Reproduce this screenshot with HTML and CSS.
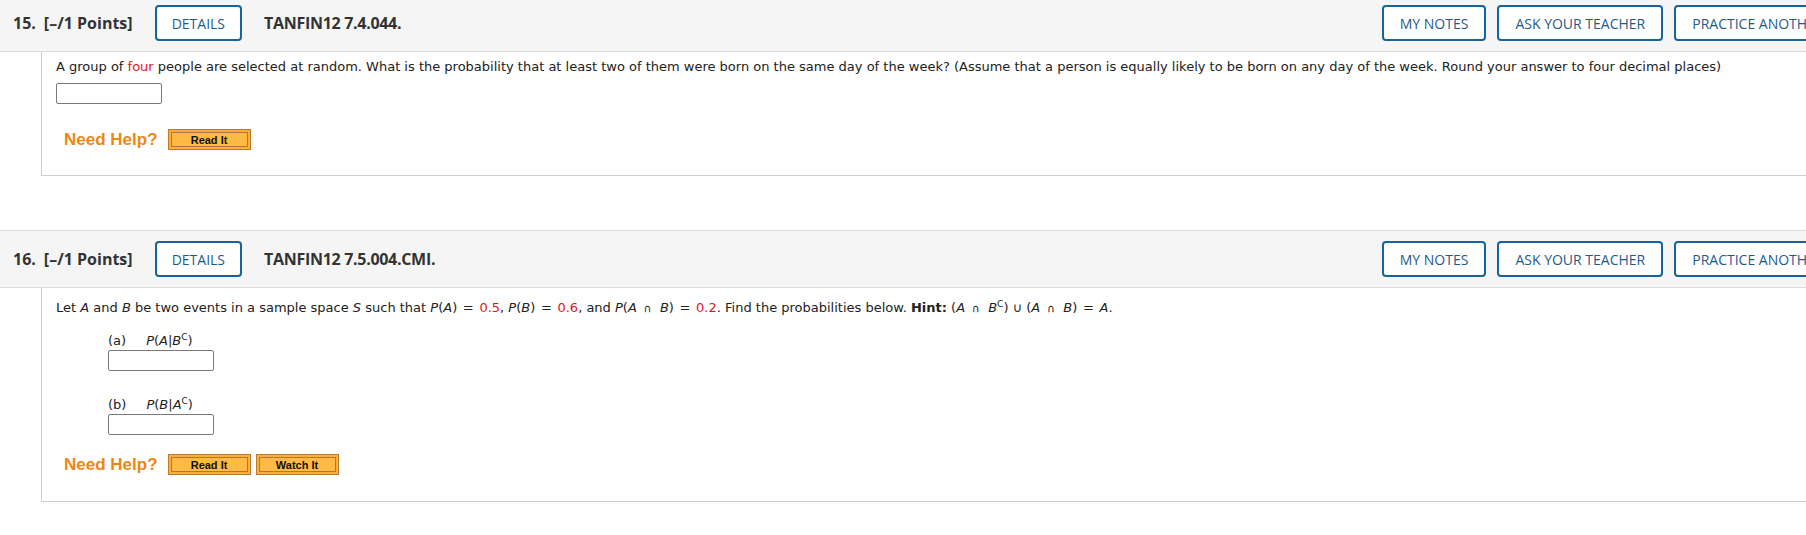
FILE: index.html
```html
<!DOCTYPE html>
<html lang="en">
<head>
    <meta charset="UTF-8">
    <meta name="viewport" content="width=device-width, initial-scale=1.0">
    <title>Assignment Questions</title>
    <link rel="stylesheet" href="styles.css">
</head>
<body>
    <div class="page">
        <!-- Question 15 -->
        <div class="question">
            <div class="q-header">
                <span class="q-num">15.</span>
                <span class="q-points">[–/1 Points]</span>
                <button class="btn-outline">DETAILS</button>
                <span class="q-code">TANFIN12 7.4.044.</span>
                <div class="q-actions">
                    <button class="btn-outline">MY NOTES</button>
                    <button class="btn-outline">ASK YOUR TEACHER</button>
                    <button class="btn-outline">PRACTICE ANOTHER VERSION</button>
                </div>
            </div>
            <div class="q-body q-body-first">
                <p class="q-text">A group of <span class="red">four</span> people are selected at random. What is the probability that at least two of them were born on the same day of the week? (Assume that a person is equally likely to be born on any day of the week. Round your answer to four decimal places)</p>
                <input type="text" class="answer">
                <div class="help-row">
                    <span class="help-label">Need Help?</span>
                    <button class="help-btn">Read It</button>
                </div>
            </div>
        </div>

        <!-- Question 16 -->
        <div class="question">
            <div class="q-header">
                <span class="q-num">16.</span>
                <span class="q-points">[–/1 Points]</span>
                <button class="btn-outline">DETAILS</button>
                <span class="q-code">TANFIN12 7.5.004.CMI.</span>
                <div class="q-actions">
                    <button class="btn-outline">MY NOTES</button>
                    <button class="btn-outline">ASK YOUR TEACHER</button>
                    <button class="btn-outline">PRACTICE ANOTHER VERSION</button>
                </div>
            </div>
            <div class="q-body">
                <p class="q-text">Let <i>A</i> and <i>B</i> be two events in a sample space <i>S</i> such that <i>P</i>(<i>A</i>) <span class="eq">=</span> <span class="red">0.5</span>, <i>P</i>(<i>B</i>) <span class="eq">=</span> <span class="red">0.6</span>, and <i>P</i>(<i>A</i><span class="op">∩</span><i>B</i>) <span class="eq">=</span> <span class="red">0.2</span>. Find the probabilities below. <b>Hint:</b> (<i>A</i><span class="op">∩</span><i>B</i><sup>C</sup>) ∪ (<i>A</i><span class="op">∩</span><i>B</i>) <span class="eq">=</span> <i>A</i>.</p>

                <div class="part">
                    <div class="part-label"><span class="part-letter">(a)</span><span><i>P</i>(<i>A</i>|<i>B</i><sup>C</sup>)</span></div>
                    <input type="text" class="answer">
                </div>
                <div class="part">
                    <div class="part-label"><span class="part-letter">(b)</span><span><i>P</i>(<i>B</i>|<i>A</i><sup>C</sup>)</span></div>
                    <input type="text" class="answer">
                </div>

                <div class="help-row">
                    <span class="help-label">Need Help?</span>
                    <button class="help-btn">Read It</button>
                    <button class="help-btn">Watch It</button>
                </div>
            </div>
        </div>
    </div>
</body>
</html>
```

FILE: styles.css
```css
/* Basic reset */
* {
    box-sizing: border-box;
    margin: 0;
    padding: 0;
}

body {
    background-color: #fff;
    color: #222;
    font-family: "DejaVu Sans", Verdana, sans-serif;
    overflow: hidden;
}

.page {
    width: 1903px;
    margin-top: -6px;
}

.question {
    margin-bottom: 54px;
}

.q-header {
    display: flex;
    align-items: center;
    height: 58px;
    padding: 0 0 0 13px;
    background-color: #f5f5f5;
    border-top: 1px solid #dcdcdc;
    border-bottom: 1px solid #dcdcdc;
    font-family: "Open Sans", sans-serif;
    font-weight: 700;
    font-size: 16px;
    color: #333;
}

.q-num {
    margin-right: 8px;
}

.q-points {
    margin-right: 22px;
}

.q-code {
    margin-left: 22px;
    letter-spacing: -0.3px;
}

.q-actions {
    display: flex;
    gap: 11px;
    margin-left: auto;
}

.btn-outline {
    height: 36px;
    padding: 0 15px;
    background-color: #fff;
    border: 2px solid #15649e;
    border-radius: 4px;
    font-family: "Open Sans", sans-serif;
    font-weight: 500;
    font-size: 14px;
    color: #1f5b8a;
    cursor: pointer;
    white-space: nowrap;
}

.q-actions .btn-outline {
    padding: 0 16px;
}

.q-body {
    margin-left: 41px;
    padding: 12px 14px 26px;
    border-left: 1px solid #cfcfcf;
    border-bottom: 1px solid #cfcfcf;
}

.q-body-first {
    padding-top: 7px;
    padding-bottom: 25px;
}

.q-text {
    font-size: 13px;
    line-height: 16px;
    color: #222;
    white-space: nowrap;
}

.red {
    color: #e3141d;
}

.eq {
    margin: 0 1.5px;
}

.op {
    margin: 0 8px 0 7px;
    font-size: 11px;
}

sup {
    font-size: 9px;
    line-height: 0;
    vertical-align: 5px;
}

.answer {
    display: block;
    width: 106px;
    height: 21px;
    margin-top: 8px;
    border: 1px solid #7a7a7a;
    border-radius: 2px;
    background-color: #fff;
}

.part {
    margin-left: 52px;
    margin-top: 16px;
}

.part + .part {
    margin-top: 26px;
}

.part-label {
    display: flex;
    gap: 20px;
    font-size: 13px;
    line-height: 16px;
}

.part .answer {
    margin-top: 1px;
}

.help-row {
    display: flex;
    align-items: center;
    gap: 5px;
    margin-top: 25px;
    margin-left: 8px;
}

.part + .help-row {
    margin-top: 19px;
}

.help-label {
    margin-right: 5px;
    font-family: "Liberation Sans", Arial, sans-serif;
    font-weight: 700;
    font-size: 17px;
    color: #ee8713;
}

.help-btn {
    width: 83px;
    height: 21px;
    background-color: #fdbb45;
    border: 1px solid #c07a30;
    box-shadow: inset 0 0 0 2px #fcae38, inset 0 0 0 3px #b47535;
    font-family: "Liberation Sans", Arial, sans-serif;
    font-weight: 700;
    font-size: 11px;
    color: #111;
    cursor: pointer;
}
```
